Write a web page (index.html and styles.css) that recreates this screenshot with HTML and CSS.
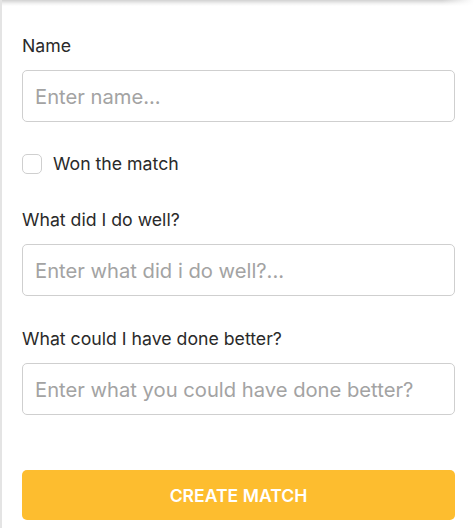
FILE: index.html
```html
<!DOCTYPE html>
<html lang="en">
<head>
<meta charset="utf-8">
<title>Create match</title>
<link rel="stylesheet" href="styles.css">
</head>
<body>
<div class="page">
  <div class="edge"></div>
  <div class="main">
    <div class="topshade"></div>
    <form class="form">
      <div class="field">
        <label class="label" for="name">Name</label>
        <input class="input" id="name" type="text" placeholder="Enter name...">
      </div>
      <label class="check">
        <span class="box"></span>
        <span class="check-text">Won the match</span>
      </label>
      <div class="field">
        <label class="label" for="well">What did I do well?</label>
        <input class="input" id="well" type="text" placeholder="Enter what did i do well?...">
      </div>
      <div class="field">
        <label class="label" for="better">What could I have done better?</label>
        <input class="input" id="better" type="text" placeholder="Enter what you could have done better?">
      </div>
      <button class="button" type="button">CREATE MATCH</button>
    </form>
  </div>
</div>
</body>
</html>
```
FILE: styles.css
```css
html, body {
  margin: 0;
  padding: 0;
  background: #ffffff;
}
body {
  font-family: Inter, "Noto Sans", sans-serif;
  color: #2a2a2a;
}
.page {
  display: flex;
  min-height: 528px;
}
.edge {
  width: 2px;
  background: #e4e4e4;
  flex: none;
}
.main {
  flex: 1;
  display: flex;
  flex-direction: column;
}
.topshade {
  height: 6px;
  background:
    linear-gradient(to right, rgba(255,255,255,0) 0, rgba(255,255,255,0) 440px, rgba(255,255,255,1) 472px),
    linear-gradient(to bottom, rgba(0,0,0,0.18), rgba(0,0,0,0.05) 60%, rgba(0,0,0,0));
}
.form {
  display: flex;
  flex-direction: column;
  padding: 28px 19px 0 20px;
}
.field {
  display: flex;
  flex-direction: column;
  gap: 12px;
}
.label {
  font-size: 17.7px;
  line-height: 24px;
  color: #2a2a2a;
}
.input {
  box-sizing: border-box;
  height: 52px;
  width: 100%;
  border: 1px solid #cfcfcf;
  border-radius: 5px;
  padding: 0 12px;
  font-family: inherit;
  font-size: 20.2px;
  color: #333;
  background: #fff;
  outline: none;
}
.input::placeholder {
  color: #a3a3a3;
}
.check {
  display: flex;
  align-items: center;
  gap: 11px;
  margin: 30px 0 32px;
  height: 24px;
}
.box {
  box-sizing: border-box;
  width: 20px;
  height: 20px;
  border: 1px solid #cfcfcf;
  border-radius: 5px;
  background: #fff;
}
.check-text {
  font-size: 17.7px;
  line-height: 24px;
}
.field + .field {
  margin-top: 31px;
}
.button {
  margin-top: 55px;
  height: 50px;
  border: none;
  border-radius: 5px;
  background: #fdbd2f;
  color: #ffffff;
  font-family: inherit;
  font-size: 17.6px;
  font-weight: 600;
  letter-spacing: 0;
}
```
